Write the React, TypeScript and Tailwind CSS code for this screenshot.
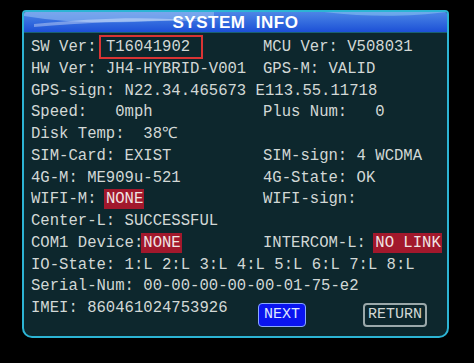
const mono = { fontFamily: "'Liberation Mono', 'DejaVu Sans Mono', monospace" };

function Row({ left, right }: { left: React.ReactNode; right?: React.ReactNode }) {
  return (
    <div className="flex h-[21.75px] items-center whitespace-pre">
      <div className="w-[232px] shrink-0">{left}</div>
      <div>{right}</div>
    </div>
  );
}

function Alert({ children }: { children: React.ReactNode }) {
  return <span className="bg-[#a2182c] text-[#f0e4e4] -ml-[2px] pl-[2px] pr-[1px] py-[1px]">{children}</span>;
}

export default function App() {
  return (
    <div className="w-[474px] h-[363px] bg-black pl-[22px] pt-[10px] overflow-hidden">
      <div className="w-[427px] h-[328px] border-2 border-[#2cb4d4] rounded-t-[4px] rounded-b-[10px] bg-[#0d272d] overflow-hidden flex flex-col">
        {/* Header */}
        <div className="relative h-[20px] shrink-0 bg-gradient-to-b from-[#4d86e6] to-[#1d4fd6] flex items-center justify-center">
          <svg className="absolute inset-0" width="423" height="20" viewBox="0 0 423 20" preserveAspectRatio="none">
            <path d="M0 4 C60 14 120 10 190 6 L190 0 L0 0 Z" fill="#9cc2f4" opacity="0.55" />
            <path d="M10 12 C70 6 120 4 180 9 C120 8 70 10 10 15 Z" fill="#ffffff" opacity="0.35" />
            <path d="M300 0 C350 6 390 4 423 0 Z" fill="#8fd0f2" opacity="0.5" />
          </svg>
          <span
            className="relative text-white font-bold text-[17px] leading-none tracking-[0.5px] whitespace-pre"
            style={{ fontFamily: "'Liberation Sans', Arial, sans-serif" }}
          >
            SYSTEM  INFO
          </span>
        </div>
        <div className="h-[1px] bg-[#2cb4d4] opacity-40 shrink-0" />

        {/* Body */}
        <div className="pl-[7px] pt-[4px] text-[15.6px] text-[#d2d8d6]" style={mono}>
          <Row
            left={
              <>
                {'SW Ver: '}
                <span className="relative">
                  T16041902
                  <span className="absolute -left-[7px] -right-[13px] -top-[3px] -bottom-[3px] border-2 border-[#d93434]" />
                </span>
              </>
            }
            right="MCU Ver: V508031"
          />
          <Row left="HW Ver: JH4-HYBRID-V001" right="GPS-M: VALID" />
          <Row left="GPS-sign: N22.34.465673 E113.55.11718" />
          <Row left="Speed:   0mph" right="Plus Num:   0" />
          <Row left="Disk Temp:  38℃" />
          <Row left="SIM-Card: EXIST" right="SIM-sign: 4 WCDMA" />
          <Row left="4G-M: ME909u-521" right="4G-State: OK" />
          <Row left={<>{'WIFI-M: '}<Alert>NONE</Alert></>} right="WIFI-sign:" />
          <Row left="Center-L: SUCCESSFUL" />
          <Row
            left={<>{'COM1 Device:'}<Alert>NONE</Alert></>}
            right={<>{'INTERCOM-L: '}<Alert>NO LINK</Alert></>}
          />
          <Row left="IO-State: 1:L 2:L 3:L 4:L 5:L 6:L 7:L 8:L" />
          <Row left="Serial-Num: 00-00-00-00-00-01-75-e2" />
          <div className="flex items-start whitespace-pre">
            <div className="w-[227px] h-[21.75px] flex items-center shrink-0">IMEI: 860461024753926</div>
            <div className="mt-[5px] w-[48px] h-[24px] rounded-[4px] border border-[#8aa8ff] bg-[#0a14f0] flex items-center justify-center text-[#dfe6ff] text-[15px]">
              NEXT
            </div>
            <div className="ml-[57px] mt-[5px] w-[64px] h-[24px] rounded-[4px] border-2 border-[#9aa8aa] flex items-center justify-center text-[15px]">
              RETURN
            </div>
          </div>
        </div>
      </div>
    </div>
  );
}
